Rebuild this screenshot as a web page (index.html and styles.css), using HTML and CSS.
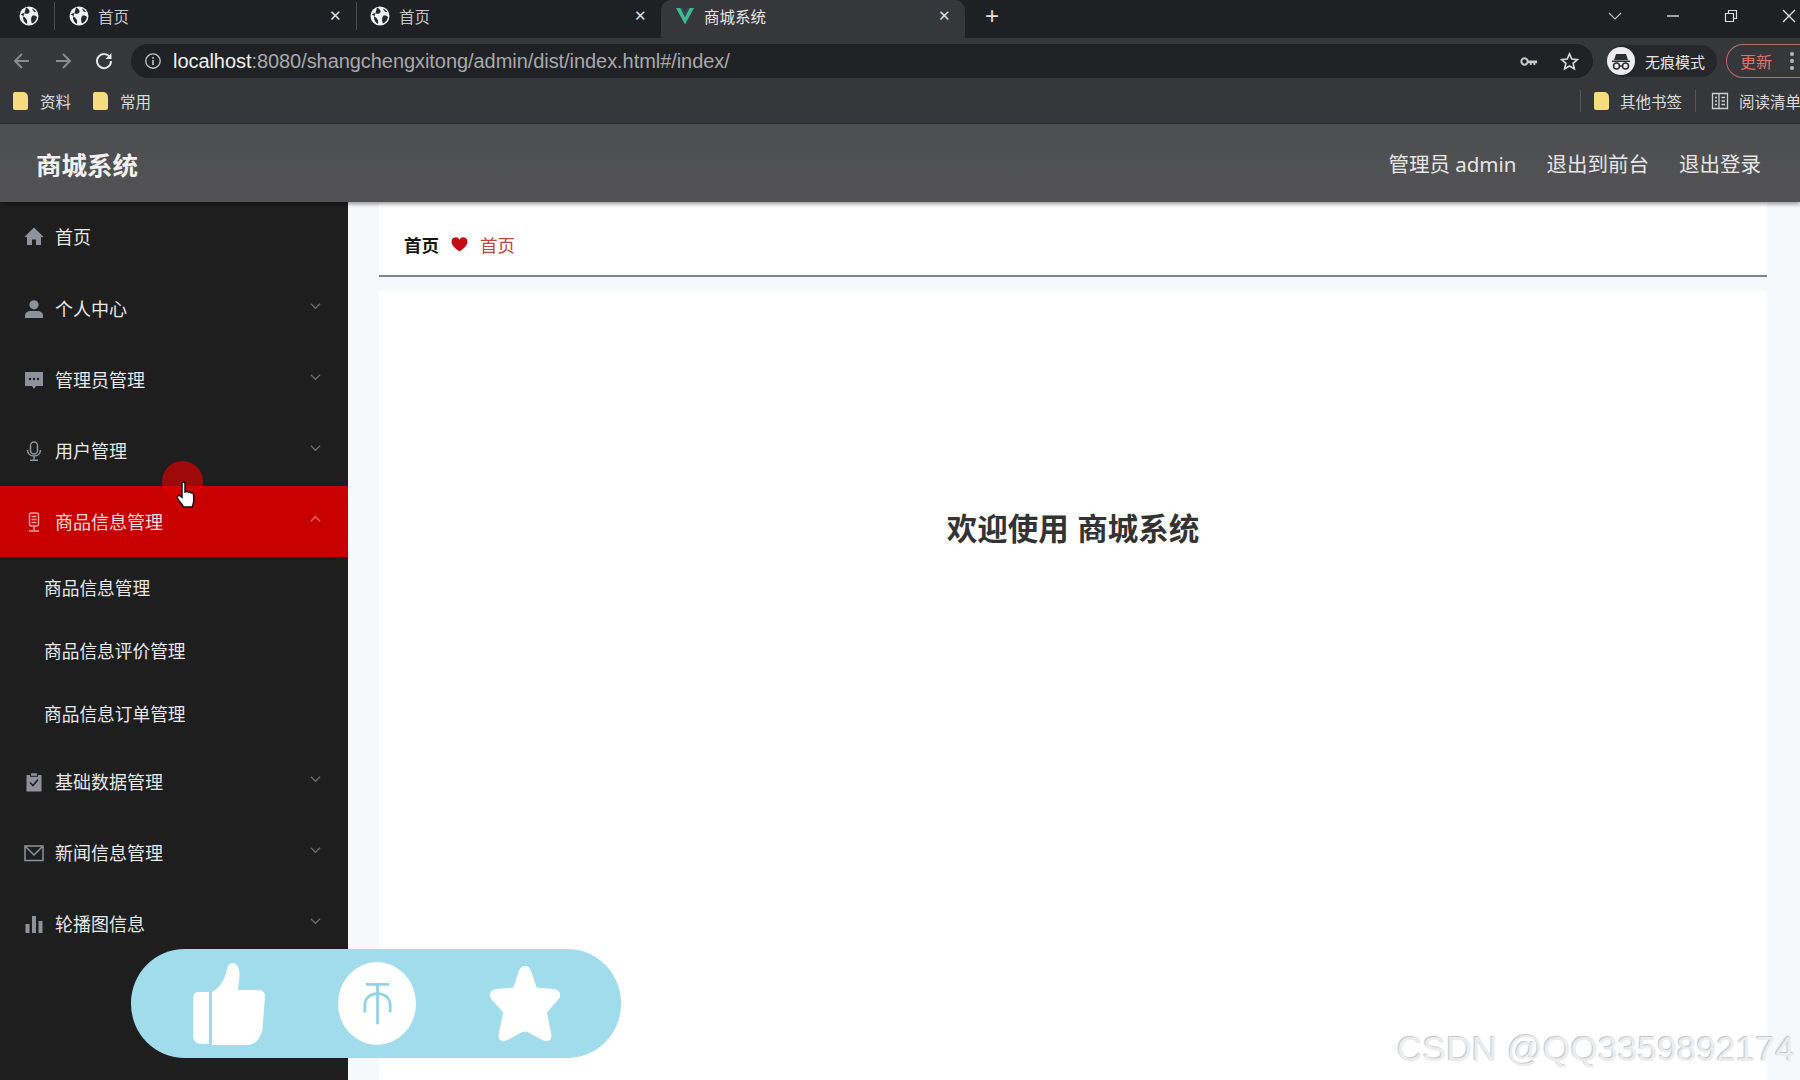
FILE: index.html
```html
<!DOCTYPE html>
<html lang="zh-CN">
<head>
    <meta charset="UTF-8">
    <title>商城系统</title>
    <link rel="stylesheet" href="styles.css">
</head>
<body>
    <div class="browser">
        <div class="tabstrip">
            <span class="tab-pin"><svg class="globe" viewBox="0 0 20 20"><use href="#i-globe"/></svg></span>
            <div class="tab"><svg class="globe" viewBox="0 0 20 20"><use href="#i-globe"/></svg><span class="tab-title">首页</span><span class="tab-x">✕</span></div>
            <div class="tab"><svg class="globe" viewBox="0 0 20 20"><use href="#i-globe"/></svg><span class="tab-title">首页</span><span class="tab-x">✕</span></div>
            <div class="tab tab-active">
                <svg class="vue" viewBox="0 0 20 18"><path d="M1 1h4.500L10 10l4.500-9H19L10 17.500z" fill="#3fb98f"/><path d="M5.500 1H8l2 4 2-4h2.500L10 10z" fill="#36495e"/></svg>
                <span class="tab-title">商城系统</span><span class="tab-x">✕</span>
            </div>
            <span class="tab-new">+</span>
            <div class="win-btns">
                <svg viewBox="0 0 16 16"><path d="M2 5l6 6 6-6" fill="none" stroke="#bbb" stroke-width="1.200"/></svg>
                <svg viewBox="0 0 16 16"><path d="M2 8h12" stroke="#ddd" stroke-width="1.400"/></svg>
                <svg viewBox="0 0 16 16"><path d="M2.500 5.500h8v8h-8zM5.500 5.500v-3h8v8h-3" fill="none" stroke="#ddd" stroke-width="1.200"/></svg>
                <svg viewBox="0 0 16 16"><path d="M2 2l12 12M14 2L2 14" stroke="#eee" stroke-width="1.400"/></svg>
            </div>
        </div>
        <div class="toolbar">
            <svg class="nav-ic" viewBox="0 0 20 20"><path d="M17 10H4M10 3l-7 7 7 7" fill="none" stroke="#8a8b8e" stroke-width="2"/></svg>
            <svg class="nav-ic" viewBox="0 0 20 20"><path d="M3 10h13M10 3l7 7-7 7" fill="none" stroke="#8a8b8e" stroke-width="2"/></svg>
            <svg class="nav-ic" viewBox="0 0 20 20"><path d="M16 6.500A7 7 0 1 0 17 10" fill="none" stroke="#e6e6e6" stroke-width="2"/><path d="M17.500 2v6h-6z" fill="#e6e6e6"/></svg>
            <div class="omnibox">
                <svg class="info" viewBox="0 0 20 20"><circle cx="10" cy="10" r="8" fill="none" stroke="#c4c4c4" stroke-width="1.500"/><path d="M10 9v5.500M10 5.500v2" stroke="#c4c4c4" stroke-width="1.800"/></svg>
                <span class="url"><b>localhost</b>:8080/shangchengxitong/admin/dist/index.html#/index/</span>
                <svg class="key" viewBox="0 0 20 12"><circle cx="5" cy="6" r="3.500" fill="none" stroke="#c9c9c9" stroke-width="2.200"/><path d="M8 5h11v3h-2v2h-2V8h-2v2h-2V8H8z" fill="#c9c9c9"/></svg>
                <svg class="star" viewBox="0 0 20 20"><path d="M10 2l2.400 5.400 5.800.6-4.400 3.900 1.300 5.800-5.100-3-5.100 3 1.300-5.800L1.800 8l5.800-.6z" fill="none" stroke="#d8d8d8" stroke-width="1.700"/></svg>
            </div>
            <div class="incognito">
                <svg viewBox="0 0 28 28"><circle cx="14" cy="14" r="14" fill="#eeeeee"/><path d="M9 7h10l2 6H7zM5 13.500h18v1.500H5z" fill="#2c2d30"/><circle cx="9.500" cy="19" r="3" fill="none" stroke="#2c2d30" stroke-width="1.500"/><circle cx="18.500" cy="19" r="3" fill="none" stroke="#2c2d30" stroke-width="1.500"/><path d="M12.500 19h3" stroke="#2c2d30" stroke-width="1.500"/></svg>
                <span>无痕模式</span>
            </div>
            <div class="update"><span>更新</span><i class="dots"></i></div>
        </div>
        <div class="bookmarks">
            <span class="bm"><i class="folder"></i>资料</span>
            <span class="bm"><i class="folder"></i>常用</span>
            <span class="bm-right"><span class="bm-sep"></span><span class="bm"><i class="folder"></i>其他书签</span><span class="bm-sep"></span>
                <span class="bm"><svg class="reading" viewBox="0 0 18 18"><path d="M1.500 1.500h15v15h-15zM8 1.500v15M4 5.500h2M4 9h2M4 12.500h2M10.500 5.500h3.500M10.500 9h3.500M10.500 12.500h3.500" fill="none" stroke="#d0d0d0" stroke-width="1.300"/></svg>阅读清单</span></span>
        </div>
    </div>

    <header class="app-header">
        <div class="app-title">商城系统</div>
        <nav class="app-links">
            <span>管理员 admin</span>
            <span>退出到前台</span>
            <span>退出登录</span>
        </nav>
    </header>

    <div class="app-body">
        <aside class="sidebar">
            <div class="menu-item menu-first">
                <svg class="menu-ic" viewBox="0 0 20 20"><path d="M10 1.500L.8 10.500l1.200 1L3 10.700V19h5v-5.500h4V19h5v-8.300l1 .8 1.200-1z" fill="#8f929b"/></svg>
                <span>首页</span>
            </div>
            <div class="menu-item">
                <svg class="menu-ic" viewBox="0 0 20 20"><circle cx="10" cy="5.800" r="4.600" fill="#8f929b"/><path d="M1 19v-2.500c0-3 3-4.500 5-4.500h8c2 0 5 1.500 5 4.500V19z" fill="#8f929b"/></svg>
                <span>个人中心</span>
                <svg class="chev" viewBox="0 0 12 8"><path d="M1 1.500l5 5 5-5" /></svg>
            </div>
            <div class="menu-item">
                <svg class="menu-ic" viewBox="0 0 20 20"><path d="M1 2h18v14h-7l-2 3-2-3H1z" fill="#8f929b"/><circle cx="6" cy="9" r="1.200" fill="#1e1e20"/><circle cx="10" cy="9" r="1.200" fill="#1e1e20"/><circle cx="14" cy="9" r="1.200" fill="#1e1e20"/></svg>
                <span>管理员管理</span>
                <svg class="chev" viewBox="0 0 12 8"><path d="M1 1.500l5 5 5-5" /></svg>
            </div>
            <div class="menu-item">
                <svg class="menu-ic" viewBox="0 0 20 20"><rect x="6.500" y="1" width="7" height="12" rx="3.500" fill="none" stroke="#8f929b" stroke-width="1.500"/><path d="M3.500 9c0 4 3 6 6.500 6s6.500-2 6.500-6M10 15v4M6 19.200h8" fill="none" stroke="#8f929b" stroke-width="1.500"/></svg>
                <span>用户管理</span>
                <svg class="chev" viewBox="0 0 12 8"><path d="M1 1.500l5 5 5-5" /></svg>
            </div>
            <div class="menu-item menu-active">
                <svg class="menu-ic" viewBox="0 0 20 20"><rect x="5.500" y="1" width="9" height="13" rx="2" fill="none" stroke="#e8a0a0" stroke-width="1.500"/><path d="M7.500 4.500h5M7.500 7.500h5M7.500 10.500h5M10 14v4M5 19h10" fill="none" stroke="#e8a0a0" stroke-width="1.500"/></svg>
                <span>商品信息管理</span>
                <svg class="chev" viewBox="0 0 12 8"><path d="M1 6.500l5-5 5 5" /></svg>
            </div>
            <div class="submenu">
                <div class="sub-item">商品信息管理</div>
                <div class="sub-item">商品信息评价管理</div>
                <div class="sub-item">商品信息订单管理</div>
            </div>
            <div class="menu-item">
                <svg class="menu-ic" viewBox="0 0 20 20"><path d="M2.500 3h15v16.500h-15z" fill="#8f929b"/><rect x="6.500" y=".8" width="7" height="3.500" fill="#8f929b" stroke="#1e1e20"/><path d="M6 10.500l3 3 5-6" fill="none" stroke="#1e1e20" stroke-width="1.600"/></svg>
                <span>基础数据管理</span>
                <svg class="chev" viewBox="0 0 12 8"><path d="M1 1.500l5 5 5-5" /></svg>
            </div>
            <div class="menu-item">
                <svg class="menu-ic" viewBox="0 0 20 20"><path d="M1 3h18v14.500H1zM2 4l8 8 8-8" fill="none" stroke="#8f929b" stroke-width="1.500"/></svg>
                <span>新闻信息管理</span>
                <svg class="chev" viewBox="0 0 12 8"><path d="M1 1.500l5 5 5-5" /></svg>
            </div>
            <div class="menu-item">
                <svg class="menu-ic" viewBox="0 0 20 20"><path d="M1.500 10h4v9h-4zM8 2h4v17H8zM14.500 7h4v12h-4z" fill="#8f929b"/></svg>
                <span>轮播图信息</span>
                <svg class="chev" viewBox="0 0 12 8"><path d="M1 1.500l5 5 5-5" /></svg>
            </div>
        </aside>

        <main class="content">
            <div class="crumbs">
                <b>首页</b>
                <svg class="heart" viewBox="0 0 18 16"><path d="M9 15.500C3 11 .5 8.300.5 5A4.500 4.500 0 0 1 9 2.800 4.500 4.500 0 0 1 17.500 5c0 3.300-2.500 6-8.500 10.500z" fill="#c40d12"/></svg>
                <span class="crumb-now">首页</span>
            </div>
            <div class="panel">
                <h1 class="welcome">欢迎使用 商城系统</h1>
            </div>
        </main>
    </div>

    <div class="cursor-dot"></div>
    <svg class="cursor" viewBox="0 0 22 30"><path d="M6 2.500c0-2 3-2 3 0V11l1-.3c1-.5 2.200 0 2.500.5 1-.5 2.200-.2 2.500.6 1.200-.4 2.500.2 2.500 1.500 0 0 .5 4 .2 6.700-.3 3-1.500 6-1.500 6H7.500S6.700 24 4 21c-1.500-1.700-2.700-4-2.700-5 0-1.500 1.700-2.200 3-1L6 16.200z" fill="#fff" stroke="#111" stroke-width="1.500"/></svg>

    <div class="share-bar">
        <svg class="share-ic" viewBox="0 0 72 82"><path d="M0 35c0-4 2-6 6-6h10v52H9c-5 0-9-3-9-8z" fill="#fff"/><path d="M19 29c6-3 13-11 15-23 .7-4 3-6 5.500-6 4 0 7 4 7 11 0 5-1 11-1.500 16h21c4 0 6 3 6 6l-2.500 33c-1.500 9-7 16-15 16H19z" fill="#fff"/></svg>
        <span class="coin"><svg viewBox="0 0 32 46"><path d="M3 2h26M16 2v44M2 33v-8C2 17 8 12 16 12s14 5 14 13v8" fill="none" stroke="#8fd3e4" stroke-width="3"/></svg></span>
        <svg class="share-ic" viewBox="0 0 74 78"><path d="M37 0c3.500 0 5.500 2.500 7 7l5 15 17 1.500c6 .5 9 5 6 10L60 47c-.5 1-.5 2 0 3l4 20c1 6-3.500 9-9 6L40 68c-2-1-4-1-6 0l-15 8c-5.500 3-10 0-9-6l4-20c.5-1 .5-2 0-3L2 33.500c-3-5 0-9.500 6-10L25 22l5-15c1.500-4.500 3.500-7 7-7z" fill="#fff"/></svg>
    </div>
    <div class="watermark">CSDN @QQ3359892174</div>

    <svg class="defs" width="0" height="0">
        <symbol id="i-globe" viewBox="0 0 20 20">
            <circle cx="10" cy="10" r="9.500" fill="#f2f2f2"/>
            <path d="M7 1.500c2 1 4 2.500 3.500 4.500S7 8 6 7.500 2.500 7 2 9c1.500 0 3 1.500 4.500 3s2 4 1.500 6C6 17 4 14 4 12M13 10c2-1 4 0 5 1-.5 3-2.500 5.500-5 6.500-1-2-1.500-5 0-7.500zM13 2.500c1.500.5 3 1.700 4 3.500-1.500 0-3-.5-4-3.500z" fill="#26272a"/>
        </symbol>
    </svg>
</body>
</html>
```

FILE: styles.css
```css
* { box-sizing: border-box; }
html, body { margin: 0; height: 100%; overflow: hidden; }
body { font-family: "Liberation Sans", "Noto Sans CJK SC", sans-serif; background: #fff; display: flex; flex-direction: column; height: 1080px; }
svg { display: block; flex: none; }
.defs { position: absolute; }

/* browser chrome */
.browser { height: 124px; flex: none; background: #36373b; border-bottom: 1px solid #2a2b2e; }
.tabstrip { height: 38px; background: #1f2023; display: flex; align-items: center; color: #c8c8c8; font-size: 15.500px; position: relative; }
.tabstrip > * { margin-bottom: 6px; }
.globe { width: 20px; height: 20px; }
.tab-pin { width: 55px; height: 28px; padding-left: 19px; display: flex; align-items: center; border-right: 1px solid #4a4b4e; }
.tab { width: 302px; height: 28px; display: flex; align-items: center; padding-left: 14px; position: relative; border-right: 1px solid #4a4b4e; }
.tab:nth-child(3) { border-right: 0; width: 304px; padding-left: 13px; }
.tab-title { margin-left: 9px; }
.tab-x { margin-left: auto; margin-right: 14px; font-size: 15px; color: #ddd; }
.tabstrip > .tab-active { width: 304px; height: 38px; margin-bottom: 0; padding-bottom: 6px; background: #36373b; border-right: 0; border-radius: 10px 10px 0 0; padding-left: 14px; color: #e8e8e8; }
.vue { width: 20px; height: 18px; }
.tab-new { margin-left: 20px; font-size: 24px; line-height: 24px; color: #e0e0e0; }
.win-btns { margin-left: auto; display: flex; align-items: center; gap: 42px; padding-right: 3px; }
.win-btns svg { width: 16px; height: 16px; }
.toolbar { height: 46px; display: flex; align-items: center; padding-left: 12px; }
.nav-ic { width: 20px; height: 20px; margin-right: 21px; }
.nav-ic:nth-child(3) { margin-right: 17px; }
.omnibox { width: 1462px; height: 34px; flex: none; background: #202124; border-radius: 17px; display: flex; align-items: center; padding-left: 13px; padding-right: 14px; }
.info { width: 18px; height: 18px; }
.url { margin-left: 11px; font-size: 20px; color: #a8a9ab; letter-spacing: -.06px; white-space: nowrap; }
.url b { font-weight: normal; color: #f0f0f0; }
.key { width: 18px; height: 11px; margin-left: auto; }
.star { width: 19px; height: 19px; margin-left: 22px; }
.incognito { margin-left: 14px; height: 32px; width: 110px; flex: none; border-radius: 16px; background: #26272a; display: flex; align-items: center; gap: 10px; font-size: 15px; color: #e8e8e8; white-space: nowrap; }
.incognito svg { width: 28px; height: 28px; }
.update { margin-left: 9px; height: 34px; width: 90px; flex: none; border: 1.500px solid #b5706c; border-right: 0; border-radius: 17px 0 0 17px; display: flex; align-items: center; padding-left: 13px; color: #e2706a; font-size: 16px; white-space: nowrap; }
.dots { width: 4px; height: 4px; border-radius: 50%; background: #bbb; box-shadow: 0 -7px #bbb, 0 7px #bbb; margin-left: 18px; flex: none; }
.bookmarks { height: 39px; display: flex; align-items: center; padding: 0 0 6px 13px; font-size: 15.500px; color: #dcdcdc; white-space: nowrap; }
.bm { display: flex; align-items: center; margin-right: 22px; }
.folder { width: 15px; height: 18px; background: #f5dc7c; border-radius: 2px 5px 2px 2px; margin-right: 12px; flex: none; }
.bm-right { margin-left: auto; display: flex; align-items: center; }
.bm-right .bm { margin-right: 0; margin-left: 13px; }
.bm-right .folder { margin-right: 11px; }
.bm-sep { width: 1px; height: 22px; background: #55565a; margin-left: 13px; }
.bm-right .bm-sep:first-child { margin-left: 0; }
.reading { width: 18px; height: 18px; margin-right: 10px; }
.bm-right .bm:last-child { margin-left: 15px; margin-right: -1px; }

/* app header */
.app-header { height: 78px; flex: none; background: linear-gradient(#4d4e50, #535355); display: flex; align-items: center; justify-content: space-between; padding: 0 39px 0 36px; box-shadow: 0 2px 4px rgba(0,0,0,.4); position: relative; z-index: 1; }
.app-title { font-size: 25.500px; font-weight: bold; color: #f2f2f2; }
.app-links { display: flex; gap: 30px; font-family: "Noto Sans", "Noto Sans CJK SC", sans-serif; font-size: 20.500px; color: #e6e6e6; }

/* sidebar */
.app-body { flex: 1; display: flex; min-height: 0; }
.sidebar { width: 348px; flex: none; background: #1e1e1f; color: #e8e8e8; font-size: 18px; }
.menu-item { height: 71px; display: flex; align-items: center; padding: 0 25px 0 24px; position: relative; }
.menu-first { padding-bottom: 4px; }
.menu-item span { margin: -2px 0 0 11px; }
.menu-first span { margin-top: 0; }
.menu-ic { width: 20px; height: 20px; }
.chev { width: 11px; height: 8px; margin-left: auto; position: relative; top: -3px; fill: none; stroke: #6d6e72; stroke-width: 1.300; margin-right: 2px; }
.menu-active { background: #c80000; color: #f6dcdc; }
.menu-active .chev { stroke: #e06a6a; }
.sub-item { height: 63.200px; display: flex; align-items: center; padding: 0 0 4px 44px; font-size: 17.700px; }

/* main */
.content { flex: 1; background: #f7f8fb; padding: 0 33px 0 31px; display: flex; flex-direction: column; min-width: 0; }
.crumbs { height: 75px; flex: none; background: #fff; border-bottom: 2px solid #84858a; display: flex; align-items: center; padding: 11px 0 0 25px; font-size: 17.500px; color: #151515; }
.heart { width: 17px; height: 15px; margin: 0 12px; }
.crumb-now { color: #c4453f; }
.panel { flex: 1; margin-top: 14px; background: #fff; }
.welcome { margin: 0; padding-top: 218px; text-align: center; font-size: 30.500px; line-height: 40px; color: #333; font-weight: bold; }

/* overlays */
.cursor-dot { position: absolute; left: 162px; top: 461px; width: 41px; height: 41px; border-radius: 50%; background: rgba(215,0,0,.7); }
.cursor { position: absolute; left: 176px; top: 481px; width: 22px; height: 30px; }
.share-bar { position: absolute; left: 131px; top: 949px; width: 490px; height: 109px; border-radius: 54px; background: #a0dcec; display: flex; align-items: center; padding-left: 62px; }
.share-ic { width: 72px; height: 82px; }
.share-ic:last-child { width: 72px; height: 76px; margin-left: 73px; }
.coin { width: 78px; height: 83px; flex: none; border-radius: 50%; background: #fff; margin-left: 73px; display: flex; align-items: center; justify-content: center; }
.coin svg { width: 29px; height: 45px; }
.watermark { position: absolute; left: 1397px; top: 1029px; font-size: 35.400px; color: #ececec; text-shadow: -1px -1px 1px #c4c4c4; white-space: nowrap; }
```
